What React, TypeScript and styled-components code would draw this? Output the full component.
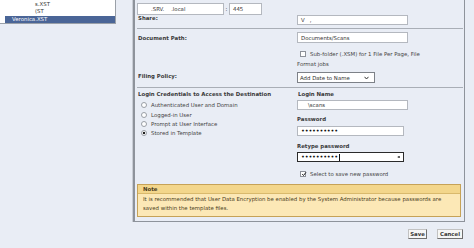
import styled, { createGlobalStyle } from 'styled-components';

const GlobalStyle = createGlobalStyle`
  html, body {
    margin: 0;
    padding: 0;
    background: #e9edf5;
  }
  body {
    width: 474px;
    height: 248px;
    overflow: hidden;
    font-family: "DejaVu Sans", Verdana, sans-serif;
    font-size: 5.4px;
    color: #333;
  }
`;

const Page = styled.div`
  display: flex;
  width: 474px;
  height: 248px;
`;

const Sidebar = styled.div`
  width: 133px;
  flex: none;
`;

const FileList = styled.div`
  width: 116px;
  height: 24px;
  box-sizing: border-box;
  padding-top: 0.5px;
  background: #fff;
  border-right: 1px solid #9aa0a8;
  border-bottom: 1px solid #9aa0a8;
`;

const FileItem = styled.div<{ $selected?: boolean; $indent: number }>`
  height: 7.5px;
  line-height: 7.5px;
  margin-left: ${p => (p.$selected ? 5 : 0)}px;
  padding-left: ${p => p.$indent}px;
  background: ${p => (p.$selected ? '#4a6597' : 'transparent')};
  color: ${p => (p.$selected ? '#fff' : '#333')};
  white-space: nowrap;
`;

const Main = styled.div`
  width: 332px;
  flex: none;
  display: flex;
  flex-direction: column;
`;

const Panel = styled.div`
  height: 222px;
  box-sizing: border-box;
  padding: 3px 1px 4px 2px;
  border-left: 2px solid #8e939b;
  border-right: 1px solid #8e939b;
  border-bottom: 1px solid #8e939b;
  box-shadow: -1px 0 0 #c9cdd5;
`;

const ServerRow = styled.div`
  display: flex;
  align-items: center;
  height: 12px;
`;

const Field = styled.div<{ $w: number; $h: number; $pad?: number; $dark?: boolean }>`
  width: ${p => p.$w}px;
  height: ${p => p.$h}px;
  box-sizing: border-box;
  padding-left: ${p => p.$pad ?? 3}px;
  padding-right: 3px;
  display: flex;
  align-items: center;
  background: #fff;
  border: 1px solid ${p => (p.$dark ? '#2b2b2b' : '#b4b8bf')};
  color: #333;
  white-space: pre;
`;

const Colon = styled.span`
  width: 5px;
  text-align: center;
`;

const FormRow = styled.div<{ $mt?: number }>`
  display: grid;
  grid-template-columns: 160px 1fr;
  margin-top: ${p => p.$mt ?? 0}px;
`;

const Label = styled.div<{ $pt?: number }>`
  padding-top: ${p => p.$pt ?? 0}px;
  padding-left: 1px;
  line-height: 7px;
  font-weight: bold;
  color: #3a3a3a;
`;

const Separator = styled.div<{ $mt: number; $mb: number }>`
  height: 1px;
  margin: ${p => p.$mt}px 0 ${p => p.$mb}px;
  background: #a9aeb6;
`;

const CheckText = styled.div<{ $mt: number; $lh: number }>`
  margin-top: ${p => p.$mt}px;
  line-height: ${p => p.$lh}px;
  color: #444;
`;

const Box = styled.span`
  display: inline-block;
  width: 6px;
  height: 6px;
  box-sizing: border-box;
  margin: 0 4px 0 3px;
  vertical-align: -1px;
  background: #fff;
  border: 1px solid #8d9199;
  position: relative;
`;

const Tick = styled.svg`
  position: absolute;
  left: -0.5px;
  top: -1px;
  width: 6px;
  height: 6px;
`;

const Select = styled(Field)`
  justify-content: space-between;
  padding-left: 2px;
  padding-right: 5px;
  border-color: #7d8188;
`;

const Columns = styled.div`
  display: grid;
  grid-template-columns: 160px 1fr;
`;

const Heading = styled.div`
  line-height: 8px;
  padding-left: 1px;
  font-weight: bold;
  color: #3a3a3a;
`;

const RadioList = styled.div`
  margin-top: 2.5px;
`;

const RadioRow = styled.div`
  display: flex;
  align-items: center;
  height: 9.4px;
  padding-left: 4px;
  gap: 4px;
  color: #444;
`;

const Radio = styled.span<{ $on?: boolean }>`
  width: 6px;
  height: 6px;
  box-sizing: border-box;
  border-radius: 50%;
  border: 1px solid #9a9ea5;
  background: ${p => (p.$on ? 'radial-gradient(circle, #1e1e1e 0 1.3px, #fff 1.6px)' : '#fff')};
`;

const SubLabel = styled.div<{ $mt: number }>`
  margin-top: ${p => p.$mt}px;
  line-height: 8px;
  font-weight: bold;
  color: #3a3a3a;
`;

const Spacer = styled.div<{ $h: number }>`
  height: ${p => p.$h}px;
`;

const Dots = styled.span`
  font-size: 6.6px;
  letter-spacing: -0.2px;
  color: #111;
`;

const Caret = styled.span`
  width: 0.8px;
  height: 7px;
  margin-left: 1px;
  background: #111;
`;

const Reveal = styled.span`
  margin-left: auto;
  width: 2.4px;
  height: 2.4px;
  border-radius: 50%;
  background: #333;
  box-shadow: -1.6px 0 0 -0.6px #555;
`;

const Note = styled.div`
  margin: 6px 2px 0 0;
  border: 1px solid #c6a257;
`;

const NoteHead = styled.div`
  line-height: 8px;
  padding-left: 5px;
  background: #f3d68b;
  border-bottom: 1px solid #d9b96c;
  font-weight: bold;
  color: #4b3c1c;
`;

const NoteBody = styled.div`
  padding: 1px 5px 3px;
  line-height: 9px;
  background: #fce8b6;
  color: #4b3c1c;
`;

const ButtonBar = styled.div`
  display: flex;
  justify-content: flex-end;
  gap: 10px;
  margin-top: 7px;
  padding-right: 2px;
`;

const Button = styled.div<{ $w: number }>`
  width: ${p => p.$w}px;
  height: 10px;
  box-sizing: border-box;
  display: flex;
  align-items: center;
  justify-content: center;
  background: #f6f6f6;
  border: 1px solid #c2c2c2;
  border-right-color: #6f6f6f;
  border-bottom-color: #6f6f6f;
  font-weight: bold;
  color: #3b3b3b;
`;

function CheckBox({ checked }: { checked?: boolean }) {
  return (
    <Box>
      {checked && (
        <Tick viewBox="0 0 6 6">
          <path d="M1.2 3.1 L2.5 4.5 L5 1.3" fill="none" stroke="#222" strokeWidth="1" />
        </Tick>
      )}
    </Box>
  );
}

export default function App() {
  return (
    <>
      <GlobalStyle />
      <Page>
        <Sidebar>
          <FileList>
            <FileItem $indent={35}>s.XST</FileItem>
            <FileItem $indent={35}>(ST</FileItem>
            <FileItem $indent={7} $selected>Veronica.XST</FileItem>
          </FileList>
        </Sidebar>
        <Main>
          <Panel>
            <ServerRow>
              <Field $w={87} $h={12} $pad={13}>{'.SRV.    .local'}</Field>
              <Colon>:</Colon>
              <Field $w={33} $h={12}>445</Field>
            </ServerRow>
            <FormRow>
              <Label>Share:</Label>
              <Field $w={111} $h={10}>{'V   ,'}</Field>
            </FormRow>
            <Separator $mt={3} $mb={3} />
            <FormRow>
              <Label $pt={2.5}>Document Path:</Label>
              <Field $w={111} $h={11}>Documents/Scans</Field>
            </FormRow>
            <FormRow>
              <div />
              <CheckText $mt={5.5} $lh={10}>
                <CheckBox />
                Sub-folder (.XSM) for 1 File Per Page, File
                <br />
                Format jobs
              </CheckText>
            </FormRow>
            <FormRow $mt={3.5}>
              <Label $pt={0.5}>Filing Policy:</Label>
              <Select $w={78} $h={11}>
                Add Date to Name
                <svg width="5" height="4" viewBox="0 0 5 4">
                  <path d="M0.5 0.8 L2.5 3 L4.5 0.8" fill="none" stroke="#333" strokeWidth="1" />
                </svg>
              </Select>
            </FormRow>
            <Separator $mt={3.5} $mb={2.5} />
            <Columns>
              <div>
                <Heading>Login Credentials to Access the Destination</Heading>
                <RadioList>
                  <RadioRow><Radio />Authenticated User and Domain</RadioRow>
                  <RadioRow><Radio />Logged-in User</RadioRow>
                  <RadioRow><Radio />Prompt at User Interface</RadioRow>
                  <RadioRow><Radio $on />Stored in Template</RadioRow>
                </RadioList>
              </div>
              <div>
                <Heading>Login Name</Heading>
                <Spacer $h={2} />
                <Field $w={111} $h={10} $pad={10}>\scans</Field>
                <SubLabel $mt={5}>Password</SubLabel>
                <Spacer $h={3} />
                <Field $w={107} $h={10}><Dots>••••••••••</Dots></Field>
                <SubLabel $mt={6}>Retype password</SubLabel>
                <Spacer $h={2} />
                <Field $w={107} $h={10} $dark>
                  <Dots>••••••••••</Dots>
                  <Caret />
                  <Reveal />
                </Field>
                <CheckText $mt={8} $lh={8}>
                  <CheckBox checked />
                  Select to save new password
                </CheckText>
              </div>
            </Columns>
            <Note>
              <NoteHead>Note</NoteHead>
              <NoteBody>
                It is recommended that User Data Encryption be enabled by the System Administrator because passwords are
                <br />
                saved within the template files.
              </NoteBody>
            </Note>
          </Panel>
          <ButtonBar>
            <Button $w={19}>Save</Button>
            <Button $w={26}>Cancel</Button>
          </ButtonBar>
        </Main>
      </Page>
    </>
  );
}
